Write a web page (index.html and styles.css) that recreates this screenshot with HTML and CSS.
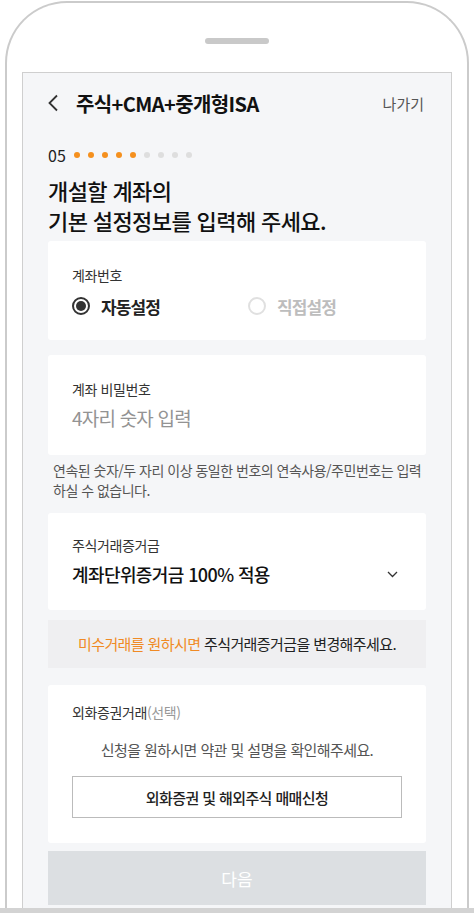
FILE: index.html
```html
<!DOCTYPE html>
<html lang="ko">
<head>
    <meta charset="UTF-8">
    <meta name="viewport" content="width=device-width, initial-scale=1.0">
    <title>주식+CMA+중개형ISA</title>
    <link rel="stylesheet" href="styles.css">
</head>
<body>
    <div class="phone">
        <div class="speaker"></div>
        <div class="screen">
            <div class="header">
                <svg class="back" width="12" height="18" viewBox="0 0 12 18">
                    <path d="M10 1.5 L2.5 9 L10 16.5" fill="none" stroke="#333" stroke-width="1.8"/>
                </svg>
                <h1 class="title">주식+CMA+중개형ISA</h1>
                <span class="exit">나가기</span>
            </div>

            <div class="content">
                <div class="step">
                    <span class="step-num">05</span>
                    <span class="dot on"></span>
                    <span class="dot on"></span>
                    <span class="dot on"></span>
                    <span class="dot on"></span>
                    <span class="dot on"></span>
                    <span class="dot"></span>
                    <span class="dot"></span>
                    <span class="dot"></span>
                    <span class="dot"></span>
                </div>
                <h2 class="heading">개설할 계좌의<br>기본 설정정보를 입력해 주세요.</h2>

                <div class="card card-account">
                    <div class="label">계좌번호</div>
                    <div class="radios">
                        <label class="radio checked"><span class="circle"></span>자동설정</label>
                        <label class="radio disabled"><span class="circle"></span>직접설정</label>
                    </div>
                </div>

                <div class="card card-password">
                    <div class="label">계좌 비밀번호</div>
                    <div class="placeholder">4자리 숫자 입력</div>
                </div>
                <p class="help">연속된 숫자/두 자리 이상 동일한 번호의 연속사용/주민번호는 입력<br>하실 수 없습니다.</p>

                <div class="card card-margin">
                    <div class="label">주식거래증거금</div>
                    <div class="select">
                        <span>계좌단위증거금 100% 적용</span>
                        <svg width="11" height="7" viewBox="0 0 11 7">
                            <path d="M1 1 L5.5 5.5 L10 1" fill="none" stroke="#333" stroke-width="1.3"/>
                        </svg>
                    </div>
                </div>

                <div class="notice"><em>미수거래를 원하시면</em> 주식거래증거금을 변경해주세요.</div>

                <div class="card card-foreign">
                    <div class="label">외화증권거래<span class="optional">(선택)</span></div>
                    <p class="desc">신청을 원하시면 약관 및 설명을 확인해주세요.</p>
                    <button class="outline">외화증권 및 해외주식 매매신청</button>
                </div>

                <button class="next">다음</button>
            </div>
        </div>
    </div>
    <div class="floor"></div>
</body>
</html>
```

FILE: styles.css
```css
body {
    margin: 0;
    height: 913px;
    overflow: hidden;
    background-color: #fff;
    font-family: "Noto Sans CJK KR", "Noto Sans", sans-serif;
    color: #222;
}

.phone {
    margin: 1px 0 0 5px;
    width: 460px;
    height: 905px;
    border: 2px solid #cbcbcb;
    border-bottom: none;
    border-radius: 62px 62px 0 0;
    overflow: hidden;
}

.speaker {
    width: 64px;
    height: 6px;
    margin: 35px auto 28px;
    background-color: #c9c9c9;
    border-radius: 3px;
}

.screen {
    margin: 0 15px;
    height: 836px;
    border: 1px solid #cfcfcf;
    border-bottom: none;
    background-color: #f5f6f8;
}

.header {
    display: flex;
    align-items: center;
    height: 60px;
    padding: 0 27px 0 24px;
}

.back {
    margin-right: 17px;
}

.title {
    flex: 1;
    margin: 0;
    font-size: 20px;
    font-weight: 700;
    letter-spacing: -0.6px;
    color: #111;
}

.exit {
    font-size: 15px;
    color: #555;
}

.content {
    padding: 0 25px;
}

.step {
    display: flex;
    align-items: center;
    height: 20px;
    margin-top: 12px;
    gap: 8px;
}

.step-num {
    font-size: 16px;
    color: #222;
}

.dot {
    width: 6px;
    height: 6px;
    border-radius: 50%;
    background-color: #dedede;
}

.dot.on {
    background-color: #f5901e;
}

.heading {
    margin: 10px 0 6px;
    font-size: 22px;
    font-weight: 500;
    line-height: 30px;
    letter-spacing: -0.6px;
    color: #111;
}

.card {
    background-color: #fff;
    border-radius: 3px;
    padding: 24px 24px;
}

.label {
    font-size: 14px;
    line-height: 20px;
    color: #333;
    letter-spacing: -0.4px;
}

.radios {
    display: flex;
    margin-top: 9px;
}

.radio {
    display: flex;
    flex-shrink: 0;
    align-items: center;
    height: 24px;
    font-size: 17px;
    font-weight: 700;
    letter-spacing: -0.9px;
}

.radio.checked {
    width: 176px;
}

.circle {
    width: 14px;
    height: 14px;
    border: 2px solid #333;
    border-radius: 50%;
    margin-right: 11px;
    position: relative;
}

.radio.checked .circle::after {
    content: "";
    position: absolute;
    left: 2px;
    top: 2px;
    width: 10px;
    height: 10px;
    border-radius: 50%;
    background-color: #333;
}

.radio.disabled {
    color: #bdbdbd;
}

.radio.disabled .circle {
    border-color: #e0e0e0;
}

.card-account {
    padding-bottom: 22px;
}

.card-password {
    margin-top: 15px;
}

.placeholder {
    margin-top: 6px;
    font-size: 19px;
    line-height: 26px;
    color: #939393;
    letter-spacing: -0.8px;
}

.help {
    margin: 5px 0 13px;
    padding-left: 5px;
    font-size: 14px;
    line-height: 20px;
    color: #555;
    letter-spacing: -0.5px;
}

.card-margin {
    padding-top: 22px;
    padding-bottom: 23px;
}

.select {
    display: flex;
    align-items: center;
    justify-content: space-between;
    margin-top: 6px;
    padding-right: 4px;
    font-size: 18px;
    line-height: 26px;
    font-weight: 500;
    letter-spacing: -0.6px;
    color: #111;
}

.notice {
    margin: 10px 0 17px;
    height: 48px;
    line-height: 48px;
    text-align: center;
    background-color: #efeff1;
    font-size: 15px;
    letter-spacing: -0.6px;
    color: #222;
}

.notice em {
    font-style: normal;
    color: #f08a24;
}

.card-foreign {
    padding-top: 17px;
    padding-bottom: 25px;
}

.optional {
    color: #999;
}

.desc {
    margin: 17px 0 15px;
    text-align: center;
    font-size: 15px;
    line-height: 22px;
    color: #555;
    letter-spacing: -0.6px;
}

.outline {
    display: block;
    width: 100%;
    height: 42px;
    background-color: #fff;
    border: 1px solid #bbb;
    font-family: inherit;
    font-size: 15px;
    font-weight: 500;
    color: #222;
    letter-spacing: -0.6px;
}

.next {
    display: block;
    width: 100%;
    height: 54px;
    margin-top: 8px;
    border: none;
    background-color: #dcdfe2;
    color: #fff;
    font-family: inherit;
    font-size: 17px;
}

.floor {
    height: 10px;
    background-color: #d3d3d3;
}
```
